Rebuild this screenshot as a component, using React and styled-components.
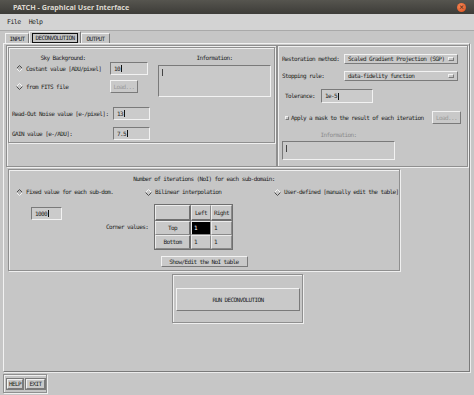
import React from "react";
import styled, { createGlobalStyle, css } from "styled-components";

const Global = createGlobalStyle`
  html, body { margin: 0; padding: 0; background: #c6c6c6; }
  body { width: 474px; height: 395px; overflow: hidden; }
  *, *::before, *::after { box-sizing: border-box; }
`;

const mono = css`
  font-family: "DejaVu Sans Mono", "Liberation Mono", monospace;
  font-size: 6px;
  letter-spacing: -0.6px;
  line-height: 1;
  color: #1e1e1e;
  white-space: nowrap;
`;

const raised = css`
  border: 1px solid;
  border-color: #f2f2f2 #7a7a7a #7a7a7a #f2f2f2;
`;
const sunken = css`
  border: 1px solid;
  border-color: #7a7a7a #f2f2f2 #f2f2f2 #7a7a7a;
`;
const groove = css`
  border: 1px solid #8f8f8f;
  box-shadow: inset 1px 1px 0 #efefef, 1px 1px 0 #efefef;
`;

const Window = styled.div`
  width: 474px;
  height: 395px;
  display: flex;
  flex-direction: column;
  background: #c6c6c6;
`;

const TitleBar = styled.div`
  height: 14px;
  flex: none;
  display: flex;
  align-items: center;
  justify-content: space-between;
  padding: 0 8px 0 13px;
  background: linear-gradient(#56554f, #3d3c38);
`;

const TitleText = styled.span`
  font-family: "Noto Sans", "DejaVu Sans", sans-serif;
  font-weight: 700;
  font-size: 7.2px;
  color: #dcd8cf;
  white-space: nowrap;
`;

const CloseBtn = styled.span`
  width: 9px;
  height: 9px;
  border-radius: 50%;
  background: radial-gradient(circle at 40% 35%, #f58a5a, #dd4c17);
  display: flex;
  align-items: center;
  justify-content: center;
  font-family: "DejaVu Sans", sans-serif;
  font-size: 6px;
  font-weight: 700;
  line-height: 1;
  color: #5a2a14;
`;

const MenuBar = styled.div`
  height: 17px;
  flex: none;
  display: flex;
  align-items: center;
  gap: 8px;
  padding-left: 7px;
  background: #d3d3d3;
  border-bottom: 1px solid #a9a9a9;
`;

const MenuItem = styled.span`
  ${mono};
  font-size: 6.5px;
  letter-spacing: -0.5px;
`;

const TabRow = styled.div`
  height: 12px;
  flex: none;
  display: flex;
  align-items: flex-end;
  padding-left: 5px;
`;

const Tab = styled.div`
  ${mono};
  ${raised};
  border-bottom: none;
  width: ${(p) => p.$w}px;
  height: ${(p) => (p.$active ? 12 : 10)}px;
  display: flex;
  align-items: center;
  justify-content: center;
  background: #c6c6c6;
`;

const FocusLabel = styled.span`
  border: 1px solid #111;
  padding: 1px 2px;
`;

const TabFrame = styled.div`
  height: 329px;
  flex: none;
  margin: 0 4px 0 3px;
  ${raised};
  box-shadow: 1px 1px 0 #ececec;
  padding: 1px 0 0 2px;
  display: flex;
  flex-direction: column;
`;

const TopRow = styled.div`
  display: flex;
  height: 122px;
  flex: none;
`;

const LeftCol = styled.div`
  width: 271px;
  ${groove};
  padding: 1px;
`;

const LeftBox = styled.div`
  height: 96px;
  ${groove};
  padding-top: 5px;
  display: flex;
  flex-direction: column;
`;

const TopPart = styled.div`
  display: flex;
  height: 44px;
  flex: none;
`;

const SkyCol = styled.div`
  margin-left: 7px;
  width: 133px;
  display: flex;
  flex-direction: column;
`;

const Caption = styled.div`
  ${mono};
  width: ${(p) => p.$w}px;
  height: 9px;
  display: flex;
  align-items: center;
  justify-content: center;
  color: ${(p) => (p.$disabled ? "#8c8c8c" : "#1e1e1e")};
`;

const FieldRow = styled.div`
  display: flex;
  align-items: center;
  height: ${(p) => p.$h || 13}px;
  margin-top: ${(p) => p.$mt || 0}px;
  padding-left: ${(p) => p.$pl || 0}px;
  flex: none;
`;

const RadioLabel = styled.label`
  ${mono};
  display: flex;
  align-items: center;
  width: ${(p) => p.$w}px;
  gap: 3px;
`;

const Text = styled.span`
  ${mono};
  display: inline-block;
  width: ${(p) => (p.$w ? `${p.$w}px` : "auto")};
  color: ${(p) => (p.$disabled ? "#8c8c8c" : "#1e1e1e")};
`;

const Entry = styled.div`
  ${mono};
  ${sunken};
  width: ${(p) => p.$w}px;
  height: ${(p) => p.$h || 13}px;
  background: #cbcbcb;
  display: flex;
  align-items: center;
  padding-left: 3px;
  flex: none;
  margin-left: ${(p) => p.$ml || 0}px;
  margin-top: ${(p) => p.$mt || 0}px;
`;

const Caret = styled.span`
  display: inline-block;
  width: 1px;
  height: 7px;
  background: #111;
  margin-left: 0.5px;
`;

const Button = styled.div`
  ${mono};
  ${raised};
  width: ${(p) => p.$w}px;
  height: ${(p) => p.$h}px;
  display: flex;
  align-items: center;
  justify-content: center;
  background: #c9c9c9;
  color: ${(p) => (p.$disabled ? "#9a9a9a" : "#1e1e1e")};
  flex: none;
`;

const InfoCol = styled.div`
  margin-left: 9px;
  width: 113px;
  display: flex;
  flex-direction: column;
`;

const TextBox = styled.div`
  ${mono};
  ${sunken};
  width: ${(p) => p.$w}px;
  height: ${(p) => p.$h}px;
  margin-top: ${(p) => p.$mt || 0}px;
  background: #c9c9c9;
  padding: 3px 0 0 3px;
`;

const ThinCaret = styled.span`
  display: block;
  width: 1px;
  height: 7px;
  background: #444;
`;

const RightCol = styled.div`
  width: 191px;
  ${groove};
  padding: 8px 0 0 4px;
  display: flex;
  flex-direction: column;
`;

const Dropdown = styled.div`
  ${mono};
  ${raised};
  width: 114px;
  height: 10px;
  display: flex;
  align-items: center;
  justify-content: space-between;
  padding: 0 3px 0 3px;
  background: #c9c9c9;
`;

const Indicator = styled.span`
  ${raised};
  width: 6px;
  height: 4px;
  background: #c6c6c6;
`;

const Check = styled.span`
  ${raised};
  width: 4px;
  height: 4px;
  margin-right: 2px;
  flex: none;
`;

const IterFrame = styled.div`
  margin: 2px 0 0 2px;
  width: 392px;
  height: 102px;
  flex: none;
  ${groove};
  padding-top: 4px;
  display: flex;
  flex-direction: column;
`;

const Centered = styled.div`
  ${mono};
  height: 9px;
  display: flex;
  align-items: center;
  justify-content: center;
`;

const RadioRow = styled.div`
  display: flex;
  height: 8px;
  margin-top: 5px;
  padding-left: 7px;
  align-items: center;
`;

const MidRow = styled.div`
  display: flex;
  height: 45px;
  margin-top: 8px;
  align-items: flex-start;
`;

const CornerLabel = styled.span`
  ${mono};
  margin-left: 44px;
  width: 42px;
  align-self: center;
`;

const Table = styled.div`
  margin-left: 6px;
  display: grid;
  grid-template-columns: 36px 20px 21px;
  grid-template-rows: 16px 14px 14px;
  border: 1px solid #6f6f6f;
  background: #c6c6c6;
`;

const Cell = styled.div`
  ${mono};
  border: 1px solid;
  border-color: #ececec #8a8a8a #8a8a8a #ececec;
  display: flex;
  align-items: center;
  justify-content: ${(p) => (p.$head ? "center" : "flex-start")};
  padding-left: ${(p) => (p.$head ? 0 : 2)}px;
  background: ${(p) => (p.$sel ? "#000" : "#c9c9c9")};
  color: ${(p) => (p.$sel ? "#fff" : "#1e1e1e")};
  border-right-width: ${(p) => (p.$col0 ? 2 : 1)}px;
  border-right-color: ${(p) => (p.$col0 ? "#6f6f6f" : "#8a8a8a")};
  border-bottom-width: ${(p) => (p.$row0 ? 2 : 1)}px;
  border-bottom-color: ${(p) => (p.$row0 ? "#6f6f6f" : "#8a8a8a")};
`;

const ShowButton = styled(Button)`
  align-self: center;
  margin-top: 7px;
`;

const RunFrame = styled.div`
  margin-top: 3px;
  align-self: center;
  width: 131px;
  height: 49px;
  flex: none;
  ${groove};
  padding: 13px 3px 0 3px;
`;

const BottomBar = styled.div`
  flex: 1;
  padding: 2px 0 0 3px;
`;

const BtnGroup = styled.div`
  width: 44px;
  height: 19px;
  ${groove};
  display: flex;
  align-items: center;
  gap: 3px;
  padding-left: 3px;
`;

const SmallBtn = styled.div`
  ${mono};
  ${raised};
  outline: 1px solid #7a7a7a;
  width: ${(p) => p.$w}px;
  height: 10px;
  display: flex;
  align-items: center;
  justify-content: center;
  background: #c9c9c9;
`;

const Diamond = ({ on }) => (
  <svg width="7" height="7" viewBox="0 0 7 7" style={{ flex: "none" }}>
    <polygon points="3.5,0.5 6.5,3.5 3.5,6.5 0.5,3.5" fill={on ? "#b4b4b4" : "#c6c6c6"} />
    <polyline points="0.5,3.5 3.5,0.5 6.5,3.5" fill="none" stroke={on ? "#4e4e4e" : "#f6f6f6"} strokeWidth="1" />
    <polyline points="0.5,3.5 3.5,6.5 6.5,3.5" fill="none" stroke={on ? "#f6f6f6" : "#4e4e4e"} strokeWidth="1" />
  </svg>
);

export default function App() {
  return (
    <>
      <Global />
      <Window>
        <TitleBar>
          <TitleText>PATCH - Graphical User Interface</TitleText>
          <CloseBtn>×</CloseBtn>
        </TitleBar>
        <MenuBar>
          <MenuItem>File</MenuItem>
          <MenuItem>Help</MenuItem>
        </MenuBar>
        <TabRow>
          <Tab $w={24}>INPUT</Tab>
          <Tab $w={52} $active>
            <FocusLabel>DECONVOLUTION</FocusLabel>
          </Tab>
          <Tab $w={29}>OUTPUT</Tab>
        </TabRow>
        <TabFrame>
          <TopRow>
            <LeftCol>
              <LeftBox>
                <TopPart>
                  <SkyCol>
                    <Caption $w={94}>Sky Background:</Caption>
                    <FieldRow>
                      <RadioLabel $w={94}>
                        <Diamond on />
                        Costant value [ADU/pixel]
                      </RadioLabel>
                      <Entry $w={38}>
                        10<Caret />
                      </Entry>
                    </FieldRow>
                    <FieldRow $mt={5}>
                      <RadioLabel $w={94}>
                        <Diamond />
                        from FITS file
                      </RadioLabel>
                      <Button $w={28} $h={13} $disabled>
                        Load...
                      </Button>
                    </FieldRow>
                  </SkyCol>
                  <InfoCol>
                    <Caption $w={113}>Information:</Caption>
                    <TextBox $w={113} $h={32} $mt={3}>
                      <ThinCaret />
                    </TextBox>
                  </InfoCol>
                </TopPart>
                <FieldRow $mt={10} $pl={3}>
                  <Text $w={101}>Read-Out Noise value [e-/pixel]:</Text>
                  <Entry $w={37}>
                    13<Caret />
                  </Entry>
                </FieldRow>
                <FieldRow $mt={7} $pl={3}>
                  <Text $w={101}>GAIN value [e-/ADU]:</Text>
                  <Entry $w={37}>
                    7.5<Caret />
                  </Entry>
                </FieldRow>
              </LeftBox>
            </LeftCol>
            <RightCol>
              <FieldRow $h={10}>
                <Text $w={62}>Restoration method:</Text>
                <Dropdown>
                  Scaled Gradient Projection (SGP)
                  <Indicator />
                </Dropdown>
              </FieldRow>
              <FieldRow $h={10} $mt={7}>
                <Text $w={62}>Stopping rule:</Text>
                <Dropdown>
                  data-fidelity function
                  <Indicator />
                </Dropdown>
              </FieldRow>
              <FieldRow $h={14} $mt={8} $pl={3}>
                <Text $w={36}>Tolerance:</Text>
                <Entry $w={52} $h={14}>
                  1e-5<Caret />
                </Entry>
              </FieldRow>
              <FieldRow $mt={8} $pl={3}>
                <Check />
                <Text $w={141}>Apply a mask to the result of each iteration</Text>
                <Button $w={29} $h={13} $disabled>
                  Load...
                </Button>
              </FieldRow>
              <FieldRow $h={9} $mt={6}>
                <Caption $w={113} $disabled>
                  Information:
                </Caption>
              </FieldRow>
              <TextBox $w={113} $h={19} $mt={2}>
                <ThinCaret />
              </TextBox>
            </RightCol>
          </TopRow>
          <IterFrame>
            <Centered>Number of iterations (NoI) for each sub-domain:</Centered>
            <RadioRow>
              <RadioLabel $w={129}>
                <Diamond on />
                Fixed value for each sub-dom.
              </RadioLabel>
              <RadioLabel $w={129}>
                <Diamond />
                Bilinear interpolation
              </RadioLabel>
              <RadioLabel $w={125}>
                <Diamond />
                User-defined [manually edit the table]
              </RadioLabel>
            </RadioRow>
            <MidRow>
              <Entry $w={31} $ml={22} $mt={3}>
                1000<Caret />
              </Entry>
              <CornerLabel>Corner values:</CornerLabel>
              <Table>
                <Cell $head $col0 $row0 />
                <Cell $head $row0>Left</Cell>
                <Cell $head $row0>Right</Cell>
                <Cell $head $col0>Top</Cell>
                <Cell $sel>1</Cell>
                <Cell>1</Cell>
                <Cell $head $col0>Bottom</Cell>
                <Cell>1</Cell>
                <Cell>1</Cell>
              </Table>
            </MidRow>
            <ShowButton $w={87} $h={11}>
              Show/Edit the NoI table
            </ShowButton>
          </IterFrame>
          <RunFrame>
            <Button $w={124} $h={23}>
              RUN DECONVOLUTION
            </Button>
          </RunFrame>
        </TabFrame>
        <BottomBar>
          <BtnGroup>
            <SmallBtn $w={16}>HELP</SmallBtn>
            <SmallBtn $w={19}>EXIT</SmallBtn>
          </BtnGroup>
        </BottomBar>
      </Window>
    </>
  );
}
